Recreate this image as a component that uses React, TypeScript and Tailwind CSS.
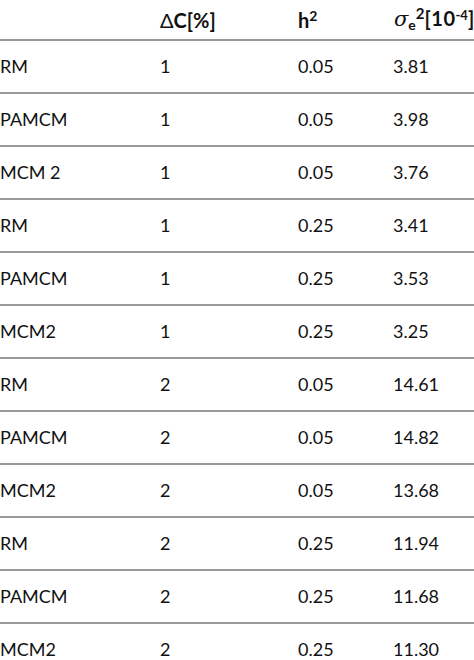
const rows = [
  ["RM", "1", "0.05", "3.81"],
  ["PAMCM", "1", "0.05", "3.98"],
  ["MCM 2", "1", "0.05", "3.76"],
  ["RM", "1", "0.25", "3.41"],
  ["PAMCM", "1", "0.25", "3.53"],
  ["MCM2", "1", "0.25", "3.25"],
  ["RM", "2", "0.05", "14.61"],
  ["PAMCM", "2", "0.05", "14.82"],
  ["MCM2", "2", "0.05", "13.68"],
  ["RM", "2", "0.25", "11.94"],
  ["PAMCM", "2", "0.25", "11.68"],
  ["MCM2", "2", "0.25", "11.30"],
];

export default function App() {
  return (
    <div className="w-[474px] h-[660px] overflow-hidden bg-white text-[#111] font-['Lato','Open_Sans',sans-serif] text-[18px]">
      <div className="grid grid-cols-[160px_138px_95px_1fr] h-[41px] items-center font-bold text-[20px] border-b-2 border-[#9a9a9a]">
        <div></div>
        <div>
          <span className="font-normal">Δ</span>C[%]
        </div>
        <div>
          h<sup className="text-[14px]">2</sup>
        </div>
        <div className="whitespace-nowrap pl-[1px]">
          <span className="italic font-normal text-[21px] font-['DejaVu_Serif',serif]">σ</span>
          <sub className="text-[14px]">e</sub>
          <sup className="text-[15px]">2</sup>
          <span className="tracking-[0.5px]">[10</span>
          <sup className="text-[13px]">-4</sup>]
        </div>
      </div>
      {rows.map((r, i) => (
        <div
          key={i}
          className="grid grid-cols-[160px_138px_95px_1fr] h-[53px] items-center border-b-2 border-[#9a9a9a]"
        >
          {r.map((c, j) => (
            <div key={j}>{c}</div>
          ))}
        </div>
      ))}
    </div>
  );
}
